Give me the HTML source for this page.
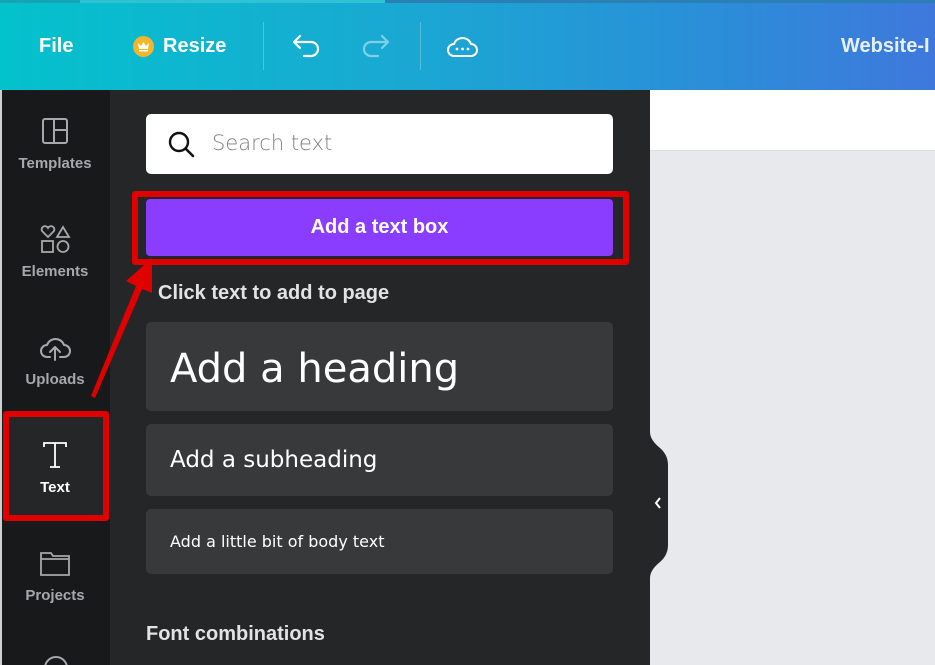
<!DOCTYPE html>
<html><head><meta charset="utf-8"><style>
*{margin:0;padding:0;box-sizing:border-box}
html,body{width:935px;height:665px;overflow:hidden}
body{font-family:"Liberation Sans",sans-serif;background:#e8e9ec;position:relative}
.hdr{position:absolute;left:0;top:0;width:935px;height:90px;background:linear-gradient(90deg,#03c2cc 0%,#1ba7d3 45%,#2a8fd8 75%,#3f78dc 100%)}
.strip{position:absolute;top:0;height:3px}
.hdr .t{position:absolute;color:#fff;font-weight:bold;font-size:20px;top:35px}
.sep{position:absolute;top:22px;width:1px;height:48px;background:rgba(255,255,255,.25)}
.side{position:absolute;left:0;top:90px;width:110px;height:575px;background:#18191b;overflow:hidden}
.panel{position:absolute;left:110px;top:90px;width:540px;height:575px;background:#252627}
.white{position:absolute;left:650px;top:90px;width:285px;height:61px;background:#fff;border-bottom:1px solid #dcdde0}
.nav{position:absolute;left:0;width:110px;text-align:center;color:#a7a8ab;font-weight:bold;font-size:15px}
.nav svg{display:block;margin:0 auto 10px}
.card{position:absolute;left:146px;width:467px;background:#38393b;border-radius:5px;color:#fff;font-family:"DejaVu Sans","Liberation Sans",sans-serif}
</style></head><body>
<div class="hdr">
<div class="strip" style="left:0;width:80px;background:#15a4b5"></div>
<div class="strip" style="left:80px;width:305px;background:#2fc2d5"></div>
<div class="strip" style="left:385px;width:550px;background:#2a80b5"></div>
<div class="t" style="left:39px">File</div>
<div style="position:absolute;left:133px;top:36px;width:21px;height:21px;border-radius:50%;background:#f2b52b"></div>
<svg style="position:absolute;left:137px;top:41px" width="13" height="11" viewBox="0 0 13 11"><path d="M1 2 L4 5 L6.5 1 L9 5 L12 2 L11 8 H2 Z M2 9h9v1.5H2z" fill="#fff"/></svg>
<div class="t" style="left:163px">Resize</div>
<div class="sep" style="left:263px"></div>
<svg style="position:absolute;left:290px;top:32px" width="34" height="26" viewBox="0 0 34 26"><path d="M10 4 L4 10 L10 16 M4 10 H21 a7 7 0 0 1 0 14 H14" fill="none" stroke="#fff" stroke-width="2.2" stroke-linecap="round" stroke-linejoin="round"/></svg>
<svg style="position:absolute;left:358px;top:32px" width="34" height="26" viewBox="0 0 34 26"><path d="M24 4 L30 10 L24 16 M30 10 H13 a7 7 0 0 0 0 14 H20" fill="none" stroke="rgba(255,255,255,.45)" stroke-width="2.2" stroke-linecap="round" stroke-linejoin="round"/></svg>
<div class="sep" style="left:420px"></div>
<svg style="position:absolute;left:446px;top:32px" width="34" height="26" viewBox="0 0 34 26"><path d="M8 24 a6 6 0 0 1 0-12 a9 9 0 0 1 17 0 a6 6 0 0 1 0 12 Z" fill="none" stroke="#fff" stroke-width="2"/><circle cx="11" cy="17" r="1.4" fill="#fff"/><circle cx="16.5" cy="17" r="1.4" fill="#fff"/><circle cx="22" cy="17" r="1.4" fill="#fff"/></svg>
<div class="t" style="left:841px;color:#e8f0ff">Website-I</div>
</div>
<div class="side"><div style="position:absolute;left:44px;top:566px;width:24px;height:24px;border:2px solid #a7a8ab;border-radius:50%"></div></div>
<div style="position:absolute;left:0;top:90px;width:2px;height:575px;background:#cfcfd1"></div>
<div class="panel"></div>
<div class="white"></div>
<div class="nav" style="top:117px"><svg width="28" height="28" viewBox="0 0 28 28"><rect x="2" y="2" width="24" height="24" rx="2" fill="none" stroke="#a7a8ab" stroke-width="2"/><path d="M13 2v24M13 13h13" stroke="#a7a8ab" stroke-width="2"/></svg>Templates</div>
<div class="nav" style="top:225px"><svg width="32" height="28" viewBox="0 0 32 28"><path d="M9 12 L3 6 a3 3 0 0 1 6-3 a3 3 0 0 1 6 3 Z" fill="none" stroke="#a7a8ab" stroke-width="1.8"/><path d="M24 2 L30 12 H18 Z" fill="none" stroke="#a7a8ab" stroke-width="1.8"/><rect x="3" y="16" width="11" height="11" fill="none" stroke="#a7a8ab" stroke-width="1.8"/><circle cx="24" cy="21.5" r="5.5" fill="none" stroke="#a7a8ab" stroke-width="1.8"/></svg>Elements</div>
<div class="nav" style="top:333px"><svg width="32" height="28" viewBox="0 0 32 28"><path d="M11 24 H8 a6 6 0 0 1 0-12 a9 9 0 0 1 17 0 a6 6 0 0 1 0 12 H21 M16 27 V15 M11 19 L16 14 L21 19" fill="none" stroke="#a7a8ab" stroke-width="2" stroke-linecap="round" stroke-linejoin="round"/></svg>Uploads</div>
<div style="position:absolute;left:3px;top:411px;width:106px;height:110px;border:6px solid #e00000;border-radius:3px;background:#252627"></div>
<div class="nav" style="top:441px;color:#fff"><svg width="28" height="28" viewBox="0 0 28 28"><path d="M3 6 V2 H25 V6 M14 2 V26 M9 26 H19" fill="none" stroke="#fff" stroke-width="1.8"/></svg>Text</div>
<div class="nav" style="top:549px"><svg width="32" height="28" viewBox="0 0 32 28"><path d="M2 4 H12 L14 7 H30 V26 H2 Z M2 10 H30" fill="none" stroke="#a7a8ab" stroke-width="1.8"/></svg>Projects</div>
<div style="position:absolute;left:146px;top:114px;width:467px;height:60px;background:#fff;border-radius:5px"></div>
<svg style="position:absolute;left:167px;top:130px" width="30" height="30" viewBox="0 0 30 30"><circle cx="12" cy="12" r="9" fill="none" stroke="#111" stroke-width="2.4"/><path d="M19 19 L26 26" stroke="#111" stroke-width="2.6" stroke-linecap="round"/></svg>
<div style="position:absolute;left:212px;top:131px;font-size:21px;color:#7d7f82;font-family:'DejaVu Sans',sans-serif;font-weight:300">Search text</div>
<div style="position:absolute;left:132px;top:191px;width:497px;height:74px;border:6px solid #e00000;border-radius:3px;background:#252627"></div>
<div style="position:absolute;left:146px;top:199px;width:467px;height:57px;background:#8b3dff;border-radius:4px;color:#fff;font-weight:bold;font-size:20px;text-align:center;line-height:57px">Add a text box</div>
<div style="position:absolute;left:158px;top:282px;color:#e3e3e4;font-weight:bold;font-size:20px">Click text to add to page</div>
<div class="card" style="top:322px;height:89px"><div style="position:absolute;left:24px;top:24px;font-size:40px">Add a heading</div></div>
<div class="card" style="top:424px;height:72px"><div style="position:absolute;left:24px;top:23px;font-size:23px">Add a subheading</div></div>
<div class="card" style="top:509px;height:65px"><div style="position:absolute;left:24px;top:23px;font-size:16px">Add a little bit of body text</div></div>
<div style="position:absolute;left:146px;top:623px;color:#e3e3e4;font-weight:bold;font-size:20px">Font combinations</div>
<svg style="position:absolute;left:640px;top:420px" width="30" height="170" viewBox="0 0 30 170"><path d="M10 0 V12 Q10 20 20 28 Q28 35 28 45 V125 Q28 135 20 142 Q10 150 10 158 V170 H0 V0 Z" fill="#252627"/><path d="M20 78 L16 83 L20 88" fill="none" stroke="#fff" stroke-width="2"/></svg>
<svg style="position:absolute;left:0;top:0" width="935" height="665"><path d="M91 396 L136 286 L126 281 L152 258 L152 293 L142 289 L95 398 Z" fill="#e00000"/></svg>
</body></html>
